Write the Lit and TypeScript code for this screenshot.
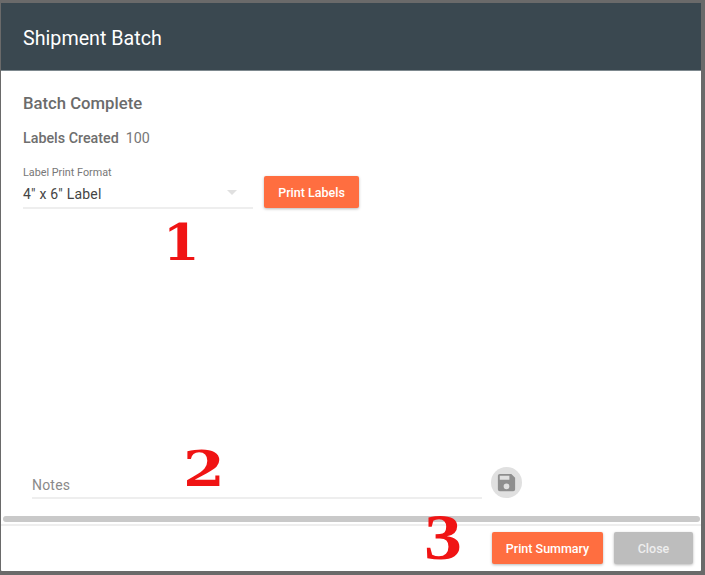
import { LitElement, html, css } from "lit";
import { customElement } from "lit/decorators.js";

@customElement("app-root")
export class AppRoot extends LitElement {
  static styles = css`
    :host {
      display: block;
      width: 705px;
      height: 575px;
      box-sizing: border-box;
      background: #6a6a6a;
      padding: 3px 4px 4px 1px;
      font-family: Roboto, sans-serif;
      overflow: hidden;
    }
    .dialog {
      position: relative;
      height: 100%;
      background: #fff;
      display: flex;
      flex-direction: column;
      border-radius: 1px;
    }
    .header {
      height: 68px;
      box-sizing: border-box;
      background: #3a4850;
      border-bottom: 1px solid #7d888e;
      color: #fff;
      font-size: 19.7px;
      line-height: 23px;
      padding: 24px 0 0 22px;
      flex: none;
    }
    .heading {
      font-size: 16.7px;
      line-height: 20px;
      font-weight: 500;
      color: #6b6b6b;
    }
    .created {
      display: flex;
      gap: 7px;
      margin-top: 15px;
      font-size: 14.3px;
      line-height: 18px;
      color: #777;
    }
    .created b {
      font-weight: 500;
      color: #6e6e6e;
    }
    .format {
      display: flex;
      align-items: flex-end;
      gap: 11px;
      margin-top: 19px;
    }
    .select {
      width: 230px;
      height: 43px;
      box-sizing: border-box;
      border-bottom: 2px solid #eee;
      display: flex;
      flex-direction: column;
      position: relative;
    }
    .select label {
      font-size: 10.8px;
      line-height: 14px;
      color: #777;
    }
    .select span {
      font-size: 14px;
      line-height: 18px;
      margin-top: 5px;
      color: #444;
      letter-spacing: 0.2px;
    }
    .arrow {
      position: absolute;
      right: 16px;
      top: 24px;
      width: 0;
      height: 0;
      border-left: 5px solid transparent;
      border-right: 5px solid transparent;
      border-top: 5px solid #e0e0e0;
    }
    .btn {
      border: 0;
      padding: 0;
      font-family: inherit;
      font-weight: 500;
      font-size: 12.5px;
      color: #fff;
      border-radius: 2px;
      box-shadow: 0 1px 3px rgba(0, 0, 0, 0.28);
      display: flex;
      align-items: center;
      justify-content: center;
    }
    .orange {
      background: #ff6e40;
    }
    .print-labels {
      width: 95px;
      height: 32px;
      margin-bottom: 1px;
    }
    .spacer {
      flex: 1;
    }
    .notes-row {
      display: flex;
      align-items: center;
      gap: 9px;
      padding-left: 9px;
    }
    .notes {
      width: 450px;
      height: 31px;
      box-sizing: border-box;
      border-bottom: 2px solid #eee;
      font-size: 14px;
      line-height: 18px;
      color: #8a8a8a;
      padding-top: 8px;
      letter-spacing: 0.2px;
    }
    .save {
      width: 31px;
      height: 31px;
      border-radius: 50%;
      background: #e0e0e0;
      display: flex;
      align-items: center;
      justify-content: center;
      margin-top: -3px;
    }
    .save svg {
      width: 23px;
      height: 23px;
      fill: #8e8e8e;
      display: block;
      margin-left: -1px;
    }
    .scrollbar {
      height: 6px;
      margin: 17px 1px 0 2px;
      border-radius: 3px;
      background: #c9c9c9;
      flex: none;
    }
    .body-wrap {
      flex: 1;
      min-height: 0;
      display: flex;
      flex-direction: column;
    }
    .body-inner {
      flex: 1;
      display: flex;
      flex-direction: column;
      padding: 23px 0 0 22px;
      min-height: 0;
    }
    .footer {
      flex: none;
      height: 47px;
      box-sizing: border-box;
      margin-top: 2px;
      border-top: 2px solid #eee;
      display: flex;
      justify-content: flex-end;
      gap: 11px;
      padding: 6px 8px 0 0;
    }
    .footer .btn {
      height: 32px;
    }
    .print-summary {
      width: 111px;
    }
    .close {
      width: 79px;
      background: #bdbdbd;
      color: #eee;
    }
    .mark {
      position: absolute;
      color: #f01414;
      font-weight: 700;
      line-height: 1;
      transform-origin: 0 0;
    }
    .m1 {
      left: 162px;
      top: 215px;
      font-family: "DejaVu Serif", serif;
      font-size: 50px;
      transform: scaleX(1.05);
    }
    .m2 {
      left: 182px;
      top: 442px;
      font-family: "DejaVu Serif", serif;
      font-size: 48px;
      transform: scaleX(1.25);
    }
    .m3 {
      left: 423px;
      top: 501px;
      font-family: "Liberation Serif", serif;
      font-size: 66px;
      transform: scaleX(1.15);
    }
  `;

  render() {
    return html`
      <div class="dialog">
        <div class="header">Shipment Batch</div>
        <div class="body-wrap">
          <div class="body-inner">
            <div class="heading">Batch Complete</div>
            <div class="created"><b>Labels Created</b><span>100</span></div>
            <div class="format">
              <div class="select">
                <label>Label Print Format</label>
                <span>4" x 6" Label</span>
                <div class="arrow"></div>
              </div>
              <button class="btn orange print-labels">Print Labels</button>
            </div>
            <div class="spacer"></div>
            <div class="notes-row">
              <div class="notes">Notes</div>
              <div class="save">
                <svg viewBox="0 0 24 24">
                  <path d="M17 3H5a2 2 0 0 0-2 2v14a2 2 0 0 0 2 2h14a2 2 0 0 0 2-2V7l-4-4zm-5 16a3 3 0 1 1 0-6 3 3 0 0 1 0 6zm3-10H5V5h10v4z" />
                </svg>
              </div>
            </div>
          </div>
          <div class="scrollbar"></div>
        </div>
        <div class="footer">
          <button class="btn orange print-summary">Print Summary</button>
          <button class="btn close">Close</button>
        </div>
        <div class="mark m1">1</div>
        <div class="mark m2">2</div>
        <div class="mark m3">3</div>
      </div>
    `;
  }
}
